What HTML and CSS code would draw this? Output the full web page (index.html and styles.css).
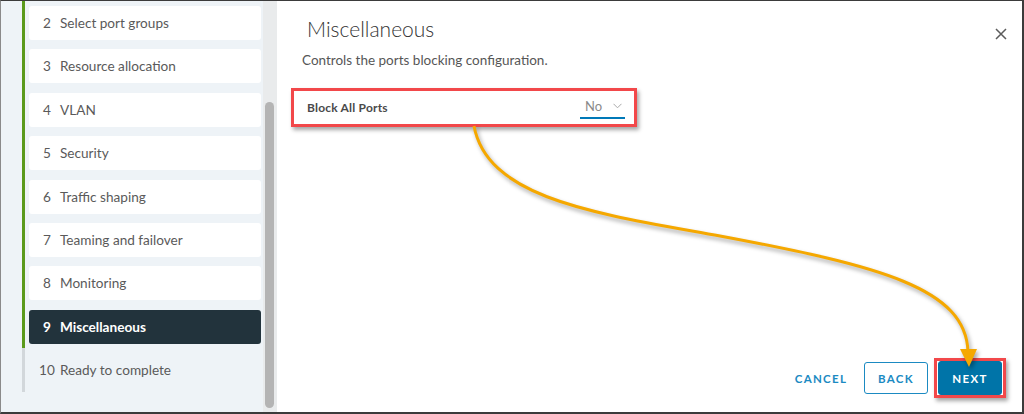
FILE: index.html
```html
<!DOCTYPE html>
<html lang="en">
<head>
<meta charset="utf-8">
<title>Miscellaneous</title>
<link rel="stylesheet" href="styles.css">
</head>
<body>
<div class="window">
  <nav class="sidebar">
    <ol class="steps">
      <li class="step done"><div class="card"><span class="num">2</span><span class="label">Select port groups</span></div></li>
      <li class="step done"><div class="card"><span class="num">3</span><span class="label">Resource allocation</span></div></li>
      <li class="step done"><div class="card"><span class="num">4</span><span class="label">VLAN</span></div></li>
      <li class="step done"><div class="card"><span class="num">5</span><span class="label">Security</span></div></li>
      <li class="step done"><div class="card"><span class="num">6</span><span class="label">Traffic shaping</span></div></li>
      <li class="step done"><div class="card"><span class="num">7</span><span class="label">Teaming and failover</span></div></li>
      <li class="step done"><div class="card"><span class="num">8</span><span class="label">Monitoring</span></div></li>
      <li class="step done"><div class="card active"><span class="num">9</span><span class="label">Miscellaneous</span></div></li>
      <li class="step todo"><div class="card plain"><span class="num">10</span><span class="label">Ready to complete</span></div></li>
    </ol>
    <div class="scrollbar"><div class="thumb"></div></div>
  </nav>
  <main class="content">
    <header class="head">
      <h1 class="title">Miscellaneous</h1>
      <button class="close" aria-label="Close">
        <svg width="12" height="12" viewBox="0 0 12 12"><path d="M1 1 L11 11 M11 1 L1 11" stroke="#5b5b5b" stroke-width="1.5" fill="none"/></svg>
      </button>
    </header>
    <p class="desc">Controls the ports blocking configuration.</p>
    <div class="field highlight">
      <span class="field-label">Block All Ports</span>
      <span class="select">No
        <svg class="chev" width="9" height="6" viewBox="0 0 9 6"><path d="M0.5 0.8 L4.5 4.8 L8.5 0.8" stroke="#a9a9a9" stroke-width="1" fill="none"/></svg>
      </span>
    </div>
    <footer class="actions">
      <button class="btn btn-link">CANCEL</button>
      <button class="btn btn-outline">BACK</button>
      <span class="next-frame highlight"><button class="btn btn-primary">NEXT</button></span>
    </footer>
  </main>
  <svg class="arrow" width="1024" height="414" viewBox="0 0 1024 414">
    <g class="arrow-g">
      <path d="M474 126 C 488 200, 600 214, 720 236 C 880 266, 966 288, 968 352" stroke="#f5a800" stroke-width="3" fill="none"/>
      <polygon points="960,349 977,349 969,367" fill="#f5a800"/>
    </g>
  </svg>
</div>
</body>
</html>
```
FILE: styles.css
```css
html, body {
  margin: 0;
  padding: 0;
}
body {
  font-family: "Lato", "Open Sans", sans-serif;
  background: #ffffff;
}
.window {
  position: relative;
  width: 1024px;
  height: 414px;
  box-sizing: border-box;
  border-top: 1px solid #3b3b3b;
  border-right: 2px solid #3b3b3b;
  border-bottom: 2px solid #3b3b3b;
  border-left: 1px solid #8a8a8a;
  display: flex;
  overflow: hidden;
}
.sidebar {
  width: 276px;
  background: #eef3f7;
  display: flex;
  flex: none;
}
.steps {
  list-style: none;
  margin: 0 0 0 21px;
  padding: 0;
  width: 241px;
}
.step {
  border-left: 3px solid #5b9a1c;
  padding: 5px 1px 4.4px 4px;
}
.step.todo {
  border-left-color: #d2d7db;
}
.card {
  height: 34px;
  background: #ffffff;
  border-radius: 3px;
  display: flex;
  align-items: center;
  font-size: 13.6px;
  color: #5a5a5a;
}
.card .num {
  width: 18px;
  margin-left: 9px;
  text-align: center;
}
.card .label {
  margin-left: 4px;
}
.card.active {
  background: #22333c;
  color: #ffffff;
  font-weight: 700;
}
.card.plain {
  background: transparent;
}
.scrollbar {
  width: 14px;
  margin-left: 1px;
  background: #e9ebec;
}
.thumb {
  margin: 101px 0 0 2px;
  width: 9px;
  height: 306px;
  border-radius: 5px;
  background: #b4b4b4;
}
.content {
  flex: 1;
  background: #ffffff;
  display: flex;
  flex-direction: column;
  padding: 0 16px 14px 0;
  min-width: 0;
}
.head {
  display: flex;
  align-items: flex-start;
  margin-top: 14px;
}
.title {
  flex: 1;
  margin: 0 0 0 30px;
  font-size: 21px;
  font-weight: 300;
  line-height: 28px;
  color: #333333;
}
.close {
  border: 0;
  background: none;
  padding: 0;
  width: 12px;
  height: 12px;
  display: flex;
  margin-top: 13px;
  margin-right: -1px;
}
.desc {
  margin: 8px 0 0 25px;
  font-size: 13.5px;
  color: #565656;
  line-height: 18px;
}
.highlight {
  border: 3px solid #f2484a;
  box-shadow: 2px 3px 4px rgba(0, 0, 0, 0.35);
}
.field {
  margin: 19px 0 0 14px;
  width: 340px;
  height: 33px;
  display: flex;
  align-items: center;
}
.field-label {
  margin-left: 13px;
  flex: 1;
  font-size: 12px;
  font-weight: 700;
  letter-spacing: 0.2px;
  color: #4a4a4a;
}
.select {
  width: 45px;
  margin-right: 9px;
  margin-top: 2px;
  box-sizing: border-box;
  padding: 0 0 3px 5px;
  border-bottom: 2px solid #0079b8;
  font-size: 13px;
  color: #8a8a8a;
  display: flex;
  align-items: center;
  gap: 11px;
}
.actions {
  margin-top: auto;
  display: flex;
  justify-content: flex-end;
  align-items: center;
  gap: 6px;
}
.btn {
  font-family: inherit;
  font-size: 11.5px;
  font-weight: 700;
  letter-spacing: 1.3px;
  height: 32px;
  border-radius: 3px;
  padding: 0;
  cursor: pointer;
}
.btn-link {
  background: none;
  border: 0;
  color: #1b8ac2;
  width: 74px;
}
.btn-outline {
  background: #ffffff;
  border: 1px solid #1b8ac2;
  color: #1b8ac2;
  width: 64px;
}
.next-frame {
  display: flex;
  padding: 0 1px;
}
.btn-primary {
  background: #0074a8;
  border: 1px solid #0074a8;
  color: #ffffff;
  width: 64px;
  height: 34px;
}
.arrow {
  position: absolute;
  left: -1px;
  top: -1px;
  pointer-events: none;
}
.arrow-g {
  filter: drop-shadow(2px 3px 2px rgba(0, 0, 0, 0.35));
}
```
